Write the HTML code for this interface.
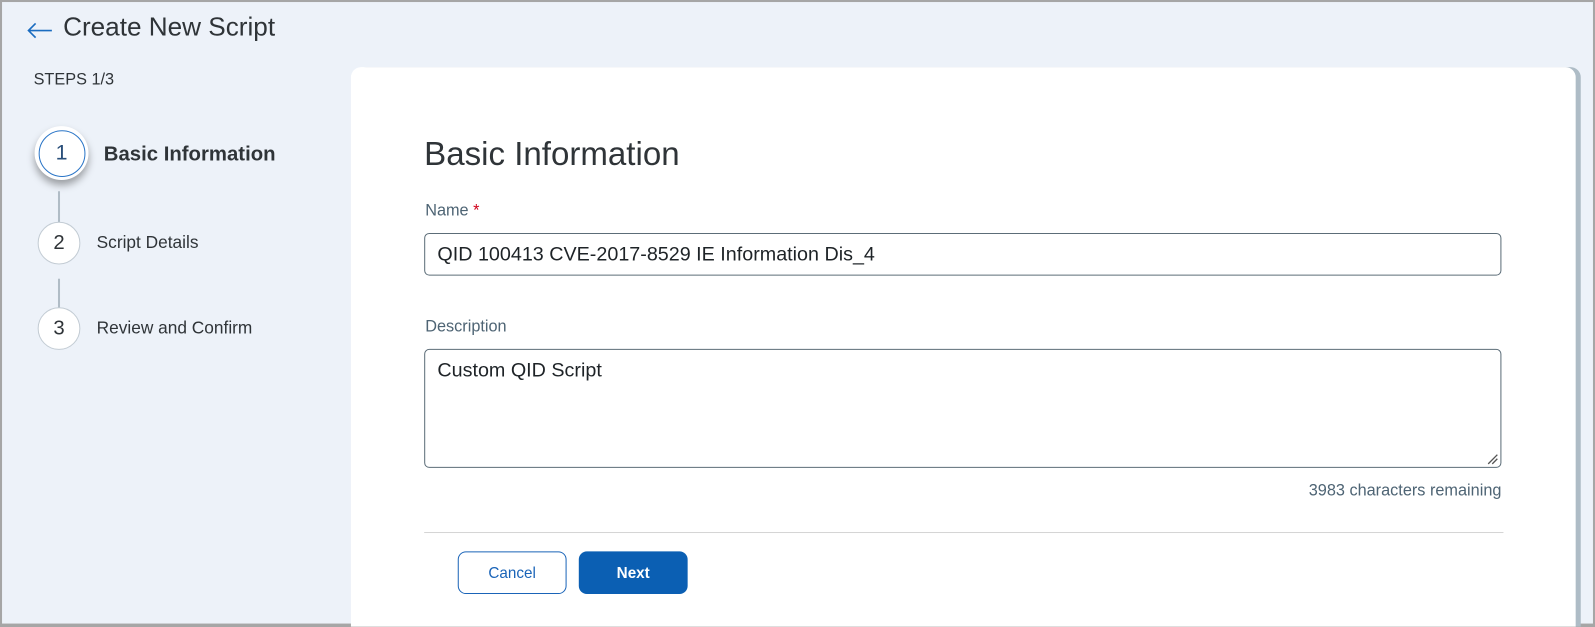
<!DOCTYPE html>
<html><head><style>
*{box-sizing:border-box;margin:0;padding:0}
body{width:1595px;height:626px;overflow:hidden;font-family:"Liberation Sans",Arial,sans-serif;background:#a6a6a6;position:relative}
#w{position:absolute;left:0;top:0;width:1568px;height:616px;transform:scale(1.01722);transform-origin:0 0;overflow:hidden}
.frame{position:absolute;left:2px;top:2px;width:1564px;height:611px;background:#edf2f9}
.title{position:absolute;left:62px;top:13px;font-size:25.7px;color:#2f3438}
.arrow{position:absolute;left:26px;top:22px}
.steps{position:absolute;left:33px;top:70px;font-size:16px;color:#2f3438}
.circ{position:absolute;border-radius:50%;background:#fff;border:1px solid #c3ccd4;color:#2f3438;display:flex;align-items:center;justify-content:center;font-size:20px}
.line{position:absolute;left:57px;width:2px;background:#b0bcc6}
.lbl{position:absolute;font-size:17px;color:#2f3438}
.card{position:absolute;left:345px;top:66px;width:1204px;height:560px;background:#fff;border-radius:10px 10px 0 0;box-shadow:5px 0 0 #aebcc6}
h1{position:absolute;left:417px;top:133px;font-size:32.5px;font-weight:normal;color:#2f3438}
.fl{position:absolute;left:418px;font-size:16px;color:#4e6474}
.inp{position:absolute;left:417px;width:1059px;border:1px solid #5c6d78;border-radius:5px;font-size:19.4px;color:#1e2327;padding-left:12px}
</style></head><body>
<div id="w">
<div class="frame"></div>
<svg class="arrow" width="26" height="16" viewBox="0 0 26 16"><path d="M25 8H2M9 1L2 8l7 7" fill="none" stroke="#1a6cc0" stroke-width="1.6"/></svg>
<div class="title">Create New Script</div>
<div class="steps">STEPS 1/3</div>
<div class="circ" style="left:34px;top:124px;width:53px;height:53px;border:none;box-shadow:0 5px 8px rgba(0,0,0,.35)"><div style="width:46px;height:46px;border-radius:50%;border:1.5px solid #2a75c7;display:flex;align-items:center;justify-content:center;font-size:21px;color:#2a4f7a">1</div></div>
<div class="lbl" style="left:102px;top:141px;font-size:20px;font-weight:bold">Basic Information</div>
<div class="line" style="top:188px;height:32px"></div>
<div class="circ" style="left:37px;top:218px;width:42px;height:42px">2</div>
<div class="lbl" style="left:95px;top:229px">Script Details</div>
<div class="line" style="top:274px;height:32px"></div>
<div class="circ" style="left:37px;top:302px;width:42px;height:42px">3</div>
<div class="lbl" style="left:95px;top:313px">Review and Confirm</div>
<div class="card"></div>
<h1>Basic Information</h1>
<div class="fl" style="top:199px">Name <span style="color:#d0021b">*</span></div>
<div class="inp" style="top:229px;height:42px;line-height:40px">QID 100413 CVE-2017-8529 IE Information Dis_4</div>
<div class="fl" style="top:313px">Description</div>
<div class="inp" style="top:343px;height:117px;padding-top:9px">Custom QID Script
<svg style="position:absolute;right:2px;bottom:2px" width="12" height="12"><path d="M2 11L11 2M6 11L11 6" stroke="#555" stroke-width="1.3"/></svg></div>
<div style="position:absolute;left:1000px;width:476px;text-align:right;top:474px;font-size:16px;color:#4e6474">3983 characters remaining</div>
<div style="position:absolute;left:417px;top:523px;width:1061px;height:1px;background:#d5d5d5"></div>
<div style="position:absolute;left:450px;top:542px;width:107px;height:42px;border:1px solid #1a64b8;border-radius:8px;color:#1a64b8;font-size:15px;display:flex;align-items:center;justify-content:center">Cancel</div>
<div style="position:absolute;left:569px;top:542px;width:107px;height:42px;background:#0b5fb3;border-radius:8px;color:#fff;font-size:15px;font-weight:bold;display:flex;align-items:center;justify-content:center">Next</div>
</div>
</body></html>
